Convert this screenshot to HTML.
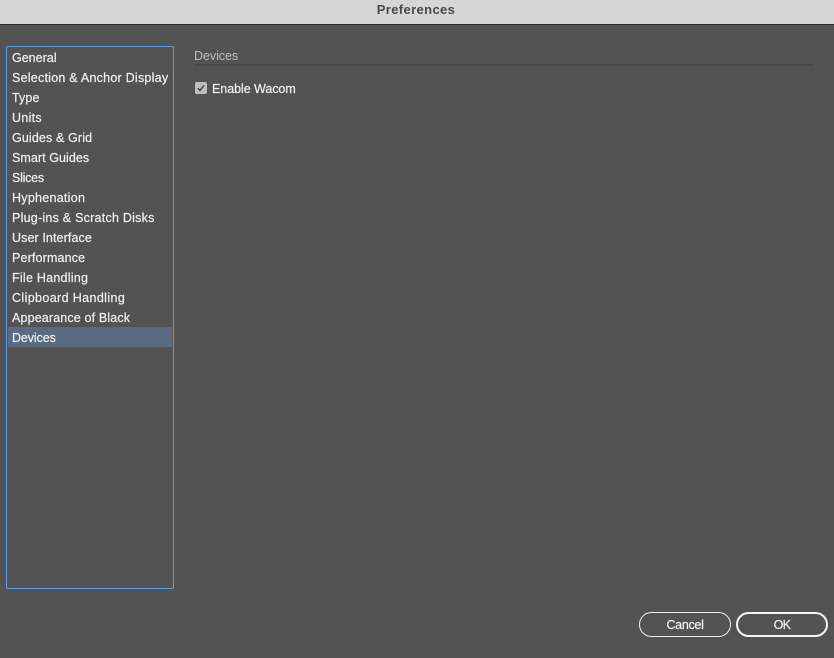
<!DOCTYPE html>
<html>
<head>
<meta charset="utf-8">
<style>
html,body{margin:0;padding:0;width:834px;height:658px;overflow:hidden;background:#535353;font-family:"Liberation Sans",sans-serif;color:#f0f0f0}
.abs{position:absolute;white-space:nowrap}
#title{position:absolute;left:0;top:0;width:832px;padding-right:2px;height:24px;background:#d6d6d6;border-bottom:1px solid #2e2e2e;text-align:center;font-size:13px;font-weight:bold;line-height:20px;color:#4a4a4a;letter-spacing:.37px}
#list{position:absolute;left:6px;top:46px;width:166px;height:541px;border:1px solid #5b9de6;border-radius:2px}
.it{position:absolute;left:12px;height:20px;line-height:20px;font-size:12.5px;color:#f0f0f0;white-space:nowrap;-webkit-text-stroke:.2px #f0f0f0}
#sel{position:absolute;left:8px;top:327px;width:164px;height:20px;background:#5a6a80}
.btn{position:absolute;box-sizing:border-box;border-radius:13px;text-align:center;font-size:12.5px;color:#f0f0f0;-webkit-text-stroke:.2px #f0f0f0}
</style>
</head>
<body>
<div id="title">Preferences</div>
<div id="list"></div>
<div id="sel"></div>
<div class="it" style="top:48px;letter-spacing:0">General</div>
<div class="it" style="top:68px;letter-spacing:.24px">Selection &amp; Anchor Display</div>
<div class="it" style="top:88px;letter-spacing:.1px">Type</div>
<div class="it" style="top:108px;letter-spacing:.3px">Units</div>
<div class="it" style="top:128px;letter-spacing:.13px">Guides &amp; Grid</div>
<div class="it" style="top:148px;letter-spacing:.07px">Smart Guides</div>
<div class="it" style="top:168px;letter-spacing:-.25px">Slices</div>
<div class="it" style="top:188px;letter-spacing:.27px">Hyphenation</div>
<div class="it" style="top:208px;letter-spacing:.24px">Plug-ins &amp; Scratch Disks</div>
<div class="it" style="top:228px;letter-spacing:.1px">User Interface</div>
<div class="it" style="top:248px;letter-spacing:.15px">Performance</div>
<div class="it" style="top:268px;letter-spacing:.25px">File Handling</div>
<div class="it" style="top:288px;letter-spacing:.38px">Clipboard Handling</div>
<div class="it" style="top:308px;letter-spacing:.15px">Appearance of Black</div>
<div class="it" style="top:328px;letter-spacing:-.1px">Devices</div>

<div class="abs" style="left:194px;top:46px;height:20px;line-height:20px;font-size:12.5px;letter-spacing:-.05px;color:#bdbdbd">Devices</div>
<div class="abs" style="left:194px;top:64px;width:620px;height:2px;background:#4a4a4a"></div>

<svg class="abs" style="left:195px;top:82px" width="12" height="12" viewBox="0 0 12 12">
<rect x="0" y="0" width="12" height="12" rx="2" fill="#bfbfbf"/>
<path d="M2.9 6.2 L5 8.4 L9 3.4" fill="none" stroke="#4c4c4c" stroke-width="1.6"/>
</svg>
<div class="abs" style="left:212px;top:79px;height:20px;line-height:20px;font-size:12.5px;letter-spacing:-.05px;color:#f0f0f0;-webkit-text-stroke:.2px #f0f0f0">Enable Wacom</div>

<div class="btn" style="left:639px;top:612px;width:92px;height:25px;border:1px solid #f0f0f0;line-height:24px;letter-spacing:-.3px">Cancel</div>
<div class="btn" style="left:736px;top:612px;width:92px;height:25px;border:2px solid #f4f4f4;line-height:22px;letter-spacing:-.6px">OK</div>
</body>
</html>
